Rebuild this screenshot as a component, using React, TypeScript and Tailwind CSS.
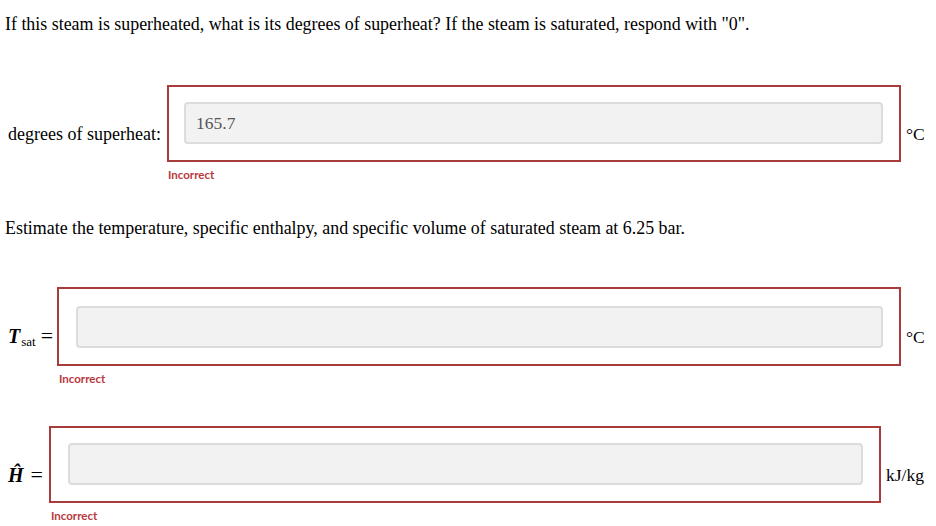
import React from "react";

const serif = { fontFamily: '"Liberation Serif", "Times New Roman", serif' };

function Incorrect({ ml }: { ml: string }) {
  return (
    <div
      className={`mt-[5px] h-[16px] leading-[16px] text-[11.5px] font-bold text-[#b8393d] ${ml}`}
      style={{ fontFamily: 'Lato, "Open Sans", sans-serif' }}
    >
      Incorrect
    </div>
  );
}

export default function App() {
  return (
    <div className="w-[936px] h-[526px] bg-white text-black overflow-hidden" style={serif}>
      <p className="pt-[12px] pl-[5px] text-[17.9px] leading-[24px]">
        If this steam is superheated, what is its degrees of superheat? If the steam is saturated, respond with "0".
      </p>

      {/* Row 1 */}
      <div className="mt-[49px] flex items-center pl-[8px]">
        <div className="w-[159px] text-[18px] leading-[24px]">degrees of superheat:</div>
        <div className="flex flex-col">
          <div className="w-[734px] border-2 border-[#a83c3c] pl-[15px] pr-[16px] pt-[15px] pb-[16px]">
            <div className="h-[42px] rounded-[4px] border-2 border-[#dcdcdc] bg-[#f2f2f2] pl-[10px] flex items-center text-[17.5px] text-[#555]">
              165.7
            </div>
          </div>
          <Incorrect ml="ml-[1px]" />
        </div>
        <div className="ml-[5px] text-[17.5px]">°C</div>
      </div>

      <p className="mt-[33px] pl-[5px] text-[17.9px] leading-[24px]">
        Estimate the temperature, specific enthalpy, and specific volume of saturated steam at 6.25 bar.
      </p>

      {/* Row 2 */}
      <div className="mt-[47px] flex items-center pl-[8px]">
        <div className="w-[49px] text-[18px] leading-[24px] flex items-baseline">
          <span className="italic font-bold text-[20px]">T</span>
          <span className="text-[13px] ml-[1px] relative top-[3px]">sat</span>
          <span className="ml-[5px] text-[22px]">=</span>
        </div>
        <div className="flex flex-col">
          <div className="w-[844px] border-2 border-[#a83c3c] pl-[17px] pr-[16px] pt-[17px] pb-[16px]">
            <div className="h-[42px] rounded-[4px] border-2 border-[#dcdcdc] bg-[#f2f2f2]" />
          </div>
          <Incorrect ml="ml-[2px]" />
        </div>
        <div className="ml-[5px] text-[17.5px]">°C</div>
      </div>

      {/* Row 3 */}
      <div className="mt-[39px] flex items-center pl-[8px]">
        <div className="w-[41px] text-[18px] leading-[24px] flex items-baseline">
          <span className="italic font-bold text-[20px]">Ĥ</span>
          <span className="ml-[7px] text-[22px]">=</span>
        </div>
        <div className="flex flex-col">
          <div className="w-[832px] border-2 border-[#a83c3c] pl-[17px] pr-[16px] pt-[15px] pb-[16px]">
            <div className="h-[42px] rounded-[4px] border-2 border-[#dcdcdc] bg-[#f2f2f2]" />
          </div>
          <Incorrect ml="ml-[2px]" />
        </div>
        <div className="ml-[5px] text-[17.5px]">kJ/kg</div>
      </div>
    </div>
  );
}
